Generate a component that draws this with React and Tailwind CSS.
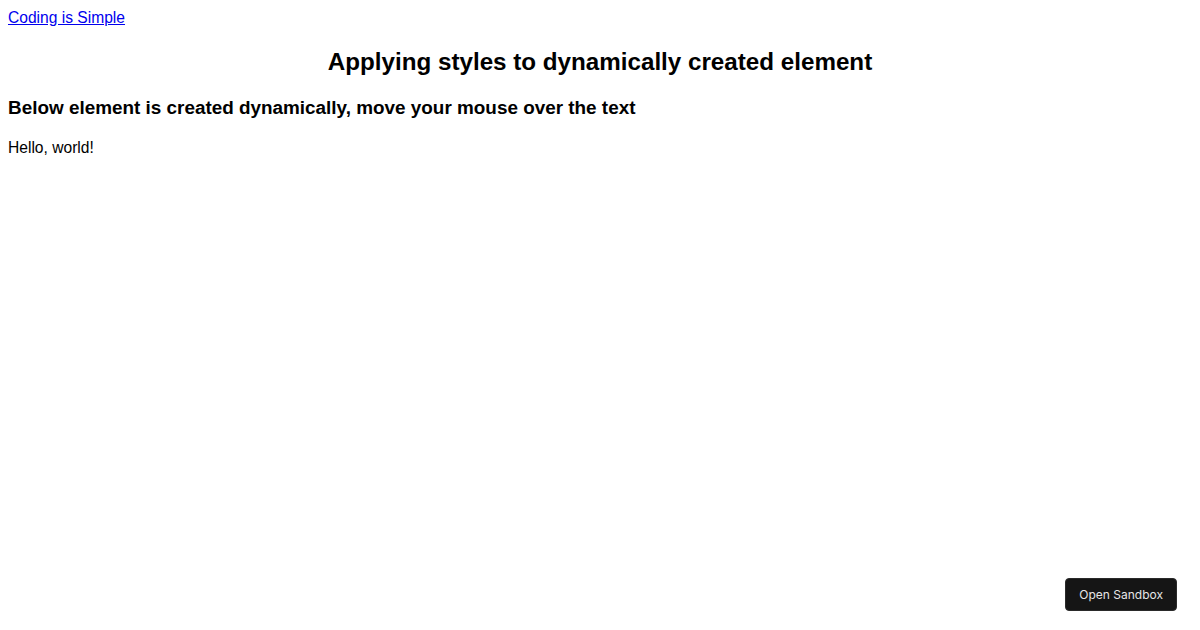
import React from 'react';

export default function App() {
  return (
    <div className="relative min-h-[630px] bg-white text-black px-2 pt-[6px] font-['Liberation_Sans',Arial,sans-serif]">
      <a href="#" className="text-[15.6px] leading-[18px] text-[#0000ee] underline">
        Coding is Simple
      </a>
      <h2 className="mt-[18px] text-center text-[24.2px] leading-[28px] font-bold">
        Applying styles to dynamically created element
      </h2>
      <h3 className="mt-[21px] text-[18.9px] leading-[22px] font-bold">
        Below element is created dynamically, move your mouse over the text
      </h3>
      <p className="mt-[20px] text-[15.6px] leading-[18px]">Hello, world!</p>

      {/* floating sandbox button */}
      <button className="absolute right-[23px] bottom-[19px] h-[33px] px-[13px] rounded-[4px] bg-[#151515] border border-[#2a2a2a] text-[12px] text-[#e6e6e6] font-['Inter',sans-serif]">
        Open Sandbox
      </button>
    </div>
  );
}
